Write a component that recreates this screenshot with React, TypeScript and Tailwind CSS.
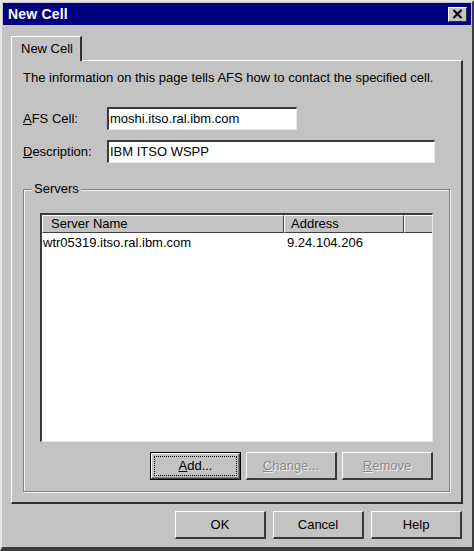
import React from "react";

const font = { fontFamily: '"Liberation Sans", Arial, sans-serif' };

function Btn({ children, w = "w-[91px]", disabled = false, isDefault = false }: { children: React.ReactNode; w?: string; disabled?: boolean; isDefault?: boolean }) {
  if (isDefault) {
    return (
      <div className={`${w} h-[28px] border border-black bg-[#c3c3c3] p-0`}>
        <div className="h-full w-full border-t border-l border-t-white border-l-white border-r border-b border-r-[#404040] border-b-[#404040] shadow-[inset_-1px_-1px_0_#808080] flex items-center justify-center p-[2px]">
          <div className="h-full w-full border border-dotted border-black flex items-center justify-center text-[13px] text-black">{children}</div>
        </div>
      </div>
    );
  }
  return (
    <div className={`${w} h-[28px] bg-[#c3c3c3] border-t border-l border-t-white border-l-white border-r-2 border-b-2 border-r-[#3a3a3a] border-b-[#3a3a3a] flex items-center justify-center text-[13px] ${disabled ? "text-[#8a8a8a] [text-shadow:1px_1px_0_#f0f0f0]" : "text-black"}`}>
      {children}
    </div>
  );
}

function Sunken({ w, children }: { w: string; children: React.ReactNode }) {
  return (
    <div className={`${w} h-[23px] bg-white border-t-2 border-l-2 border-t-[#3a3a3a] border-l-[#3a3a3a] border-b border-r border-b-[#e8e8e8] border-r-[#e8e8e8] flex items-center pl-[1px] text-[13px] text-black`}>
      {children}
    </div>
  );
}

export default function App() {
  return (
    <div className="w-[474px] h-[551px] bg-[#c3c3c3] overflow-hidden" style={font}>
      <div className="w-full h-full border-t-2 border-l-2 border-t-[#e4e4e4] border-l-[#e4e4e4] border-r-2 border-b-4 border-r-[#3a3a3a] border-b-[#3a3a3a] pt-[1px] pl-[1px] pr-[1px] flex flex-col">
        {/* Title bar */}
        <div className="h-[22px] bg-[#00007e] flex items-center justify-between pl-[5px] pr-[4px]">
          <span className="text-white font-bold text-[14px] tracking-[0.2px]">New Cell</span>
          <div className="w-[19px] h-[15px] bg-[#c3c3c3] border-t border-l border-t-white border-l-white border-r border-b border-r-[#303030] border-b-[#303030] flex items-center justify-center">
            <svg width="11" height="10" viewBox="0 0 11 10">
              <path d="M1.5 1 L9.5 9 M9.5 1 L1.5 9" stroke="black" strokeWidth="2.2" />
            </svg>
          </div>
        </div>

        {/* Tabs */}
        <div className="mt-[11px] ml-[8px] w-[452px]">
          <div className="flex">
            <div className="relative z-10 w-[71px] h-[25px] bg-[#c3c3c3] border-t border-l border-t-white border-l-white border-r-2 border-r-[#303030] rounded-tl-[2px] flex items-center pl-[9px] text-[13px] text-black -mb-[1px]">
              New Cell
            </div>
          </div>
          <div className="h-[444px] border-t border-l border-t-white border-l-white border-r-2 border-b-2 border-r-[#303030] border-b-[#303030] pl-[11px] pr-[12px] pt-[9px]">
            <div className="text-[13px] text-black leading-[16px]">
              The information on this page tells AFS how to contact the specified cell.
            </div>

            <div className="mt-[21px] flex items-center">
              <span className="w-[84px] text-[13px] text-black"><u>A</u>FS Cell:</span>
              <Sunken w="w-[190px]">moshi.itso.ral.ibm.com</Sunken>
            </div>
            <div className="mt-[10px] flex items-center">
              <span className="w-[84px] text-[13px] text-black"><u>D</u>escription:</span>
              <Sunken w="w-[328px]">IBM ITSO WSPP</Sunken>
            </div>

            {/* Servers group box */}
            <div className="relative mt-[26px] w-[427px] h-[303px] border border-[#808080] shadow-[1px_1px_0_#f4f4f4,inset_1px_1px_0_#f4f4f4] pt-[23px] pl-[16px] pr-[16px]">
              <span className="absolute -top-[9px] left-[8px] bg-[#c3c3c3] px-[2px] text-[13px] leading-[16px] text-black">Servers</span>
              <div className="w-[393px] h-[229px] bg-white border-t-2 border-l-2 border-t-[#3a3a3a] border-l-[#3a3a3a] border-b border-r border-b-[#e8e8e8] border-r-[#e8e8e8] flex flex-col">
                <div className="flex h-[18px] text-[13px] text-black">
                  <div className="w-[242px] bg-[#c3c3c3] border-t border-l border-t-white border-l-white border-r border-b border-r-[#404040] border-b-[#404040] pl-[8px] leading-[16px]">Server Name</div>
                  <div className="w-[120px] bg-[#c3c3c3] border-t border-l border-t-white border-l-white border-r border-b border-r-[#404040] border-b-[#404040] pl-[6px] leading-[16px]">Address</div>
                  <div className="flex-1 bg-[#c3c3c3] border-t border-l border-t-white border-l-white border-b border-b-[#404040]"></div>
                </div>
                <div className="flex text-[13px] text-black leading-[18px] pt-[1px]">
                  <div className="w-[243px] pl-[1px]">wtr05319.itso.ral.ibm.com</div>
                  <div className="pl-[2px]">9.24.104.206</div>
                </div>
              </div>
              <div className="mt-[10px] flex justify-end gap-[5px] pr-[-1px]">
                <Btn isDefault><span><u>A</u>dd...</span></Btn>
                <Btn disabled><span><u>C</u>hange...</span></Btn>
                <Btn disabled><span><u>R</u>emove</span></Btn>
              </div>
            </div>
          </div>
        </div>

        {/* Bottom buttons */}
        <div className="mt-[7px] flex justify-end gap-[7px] pr-[9px]">
          <Btn>OK</Btn>
          <Btn>Cancel</Btn>
          <Btn>Help</Btn>
        </div>
      </div>
    </div>
  );
}
